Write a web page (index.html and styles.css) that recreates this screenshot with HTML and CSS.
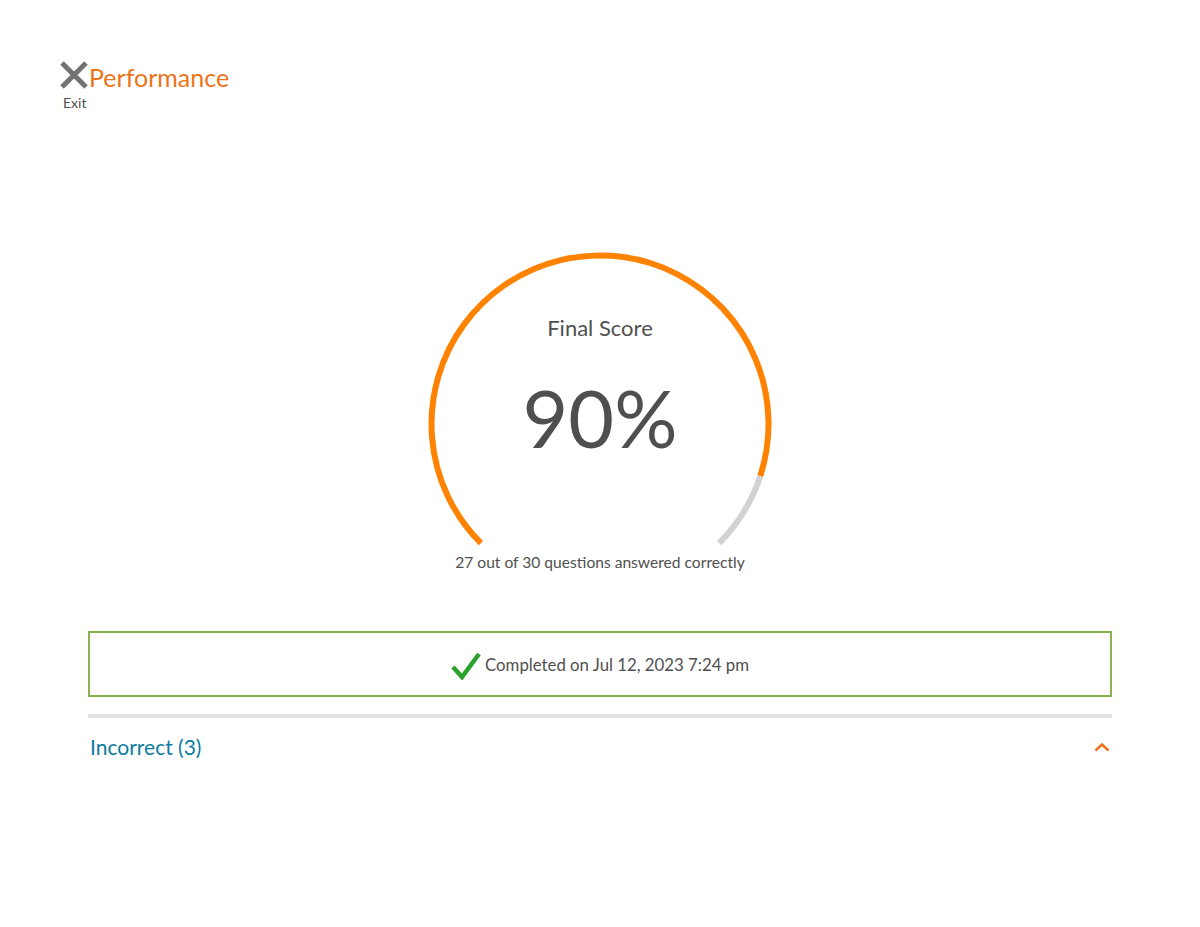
FILE: index.html
```html
<!DOCTYPE html>
<html>
<head>
<meta charset="utf-8">
<link rel="stylesheet" href="styles.css">
</head>
<body>
<header class="header">
  <div class="title-row">
    <svg class="exit-icon" width="28" height="28" viewBox="0 0 28 28"><path d="M2 2 L26 26 M26 2 L2 26" stroke="#737373" stroke-width="5" fill="none"/></svg>
    <h1 class="title">Performance</h1>
  </div>
  <div class="exit-label">Exit</div>
</header>
<main class="main">
  <section class="gauge">
    <div class="gauge-stack">
      <svg class="gauge-ring" width="344" height="300" viewBox="0 0 344 300">
        <path d="M52.9 291.1 A168.5 168.5 0 1 1 332.25 224.07" stroke="#ff8200" stroke-width="6" fill="none"/>
        <path d="M332.25 224.07 A168.5 168.5 0 0 1 291.1 291.1" stroke="#d2d2d2" stroke-width="6" fill="none"/>
      </svg>
      <div class="gauge-text">
        <div class="gauge-label">Final Score</div>
        <div class="gauge-value">90%</div>
      </div>
    </div>
    <div class="gauge-caption">27 out of 30 questions answered correctly</div>
  </section>
  <div class="completed">
    <svg class="check" width="30" height="28" viewBox="0 0 30 28"><path d="M2 15 L11 25 L28 2" stroke="#2ba22b" stroke-width="4.5" fill="none" stroke-linejoin="miter"/></svg>
    <span>Completed on Jul 12, 2023 7:24 pm</span>
  </div>
  <div class="divider"></div>
  <div class="incorrect-row">
    <span class="incorrect-label">Incorrect (3)</span>
    <svg class="chevron" width="16" height="10" viewBox="0 0 16 10"><path d="M1.5 8.5 L8 2.5 L14.5 8.5" stroke="#ee7420" stroke-width="2.6" fill="none"/></svg>
  </div>
</main>
</body>
</html>
```
FILE: styles.css
```css
html, body {
  margin: 0;
  padding: 0;
  background: #ffffff;
}
body {
  font-family: Lato, "Open Sans", sans-serif;
  color: #505050;
}
.header {
  padding: 61px 0 0 60px;
}
.title-row {
  display: flex;
  align-items: center;
  gap: 1px;
}
.exit-icon {
  display: block;
  flex: none;
}
.title {
  margin: 0;
  font-size: 25px;
  font-weight: 400;
  color: #ec7418;
  line-height: 28px;
  position: relative;
  top: 2px;
}
.exit-label {
  font-size: 14px;
  color: #505050;
  margin-left: 3px;
  line-height: 18px;
  margin-top: 5px;
}
.main {
  padding: 0 88px;
}
.gauge {
  display: flex;
  flex-direction: column;
  align-items: center;
  margin-top: 140px;
}
.gauge-stack {
  display: grid;
}
.gauge-ring {
  grid-area: 1 / 1;
  display: block;
}
.gauge-text {
  grid-area: 1 / 1;
  display: flex;
  flex-direction: column;
  align-items: center;
  padding-top: 63px;
}
.gauge-label {
  font-size: 22px;
  line-height: 26px;
  color: #505050;
}
.gauge-value {
  font-size: 79px;
  line-height: 90px;
  margin-top: 32px;
  color: #4f4f4f;
}
.gauge-caption {
  font-size: 15.6px;
  line-height: 20px;
  margin-top: 0px;
  color: #505050;
}
.completed {
  margin-top: 59px;
  height: 62px;
  border: 2px solid #8cb24e;
  display: flex;
  align-items: center;
  justify-content: center;
  gap: 4px;
  font-size: 16.8px;
  color: #505050;
}
.check {
  display: block;
  margin-top: 4px;
}
.divider {
  margin-top: 17px;
  height: 4px;
  background: #e2e2e2;
}
.incorrect-row {
  display: flex;
  align-items: center;
  justify-content: space-between;
  margin-top: 16px;
  padding-left: 2px;
}
.incorrect-label {
  font-size: 21px;
  line-height: 26px;
  color: #0d7ba0;
}
.chevron {
  display: block;
  margin-right: 2px;
}
```
